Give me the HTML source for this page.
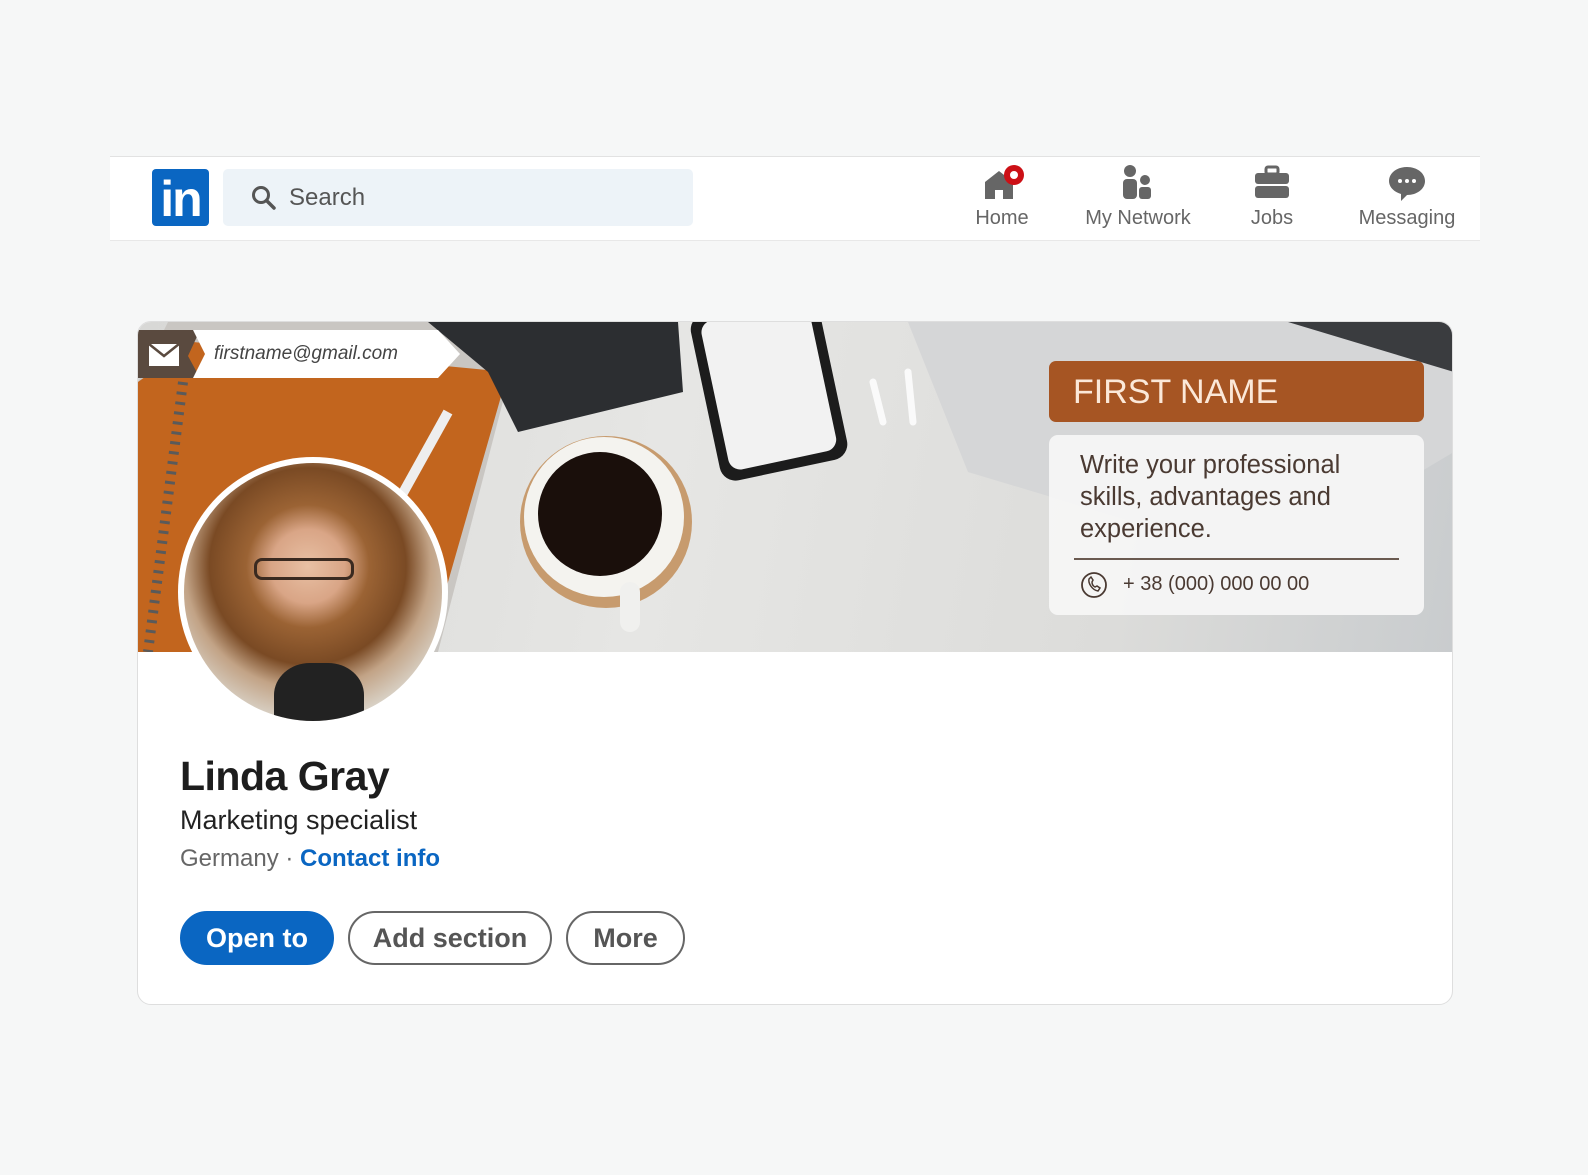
<!DOCTYPE html>
<html><head><meta charset="utf-8"><style>
*{margin:0;padding:0;box-sizing:border-box}
body{width:1588px;height:1175px;background:#f6f7f7;font-family:"Liberation Sans",sans-serif;position:relative;overflow:hidden}
.nav{position:absolute;left:110px;top:156px;width:1370px;height:85px;background:#fff;border-top:1px solid #e2e2e2;border-bottom:1px solid #e8e8e8}
.logo{position:absolute;left:42px;top:12px;width:57px;height:57px;background:#0a66c2;border-radius:4px;color:#fff;font-weight:bold;font-size:50px;line-height:60px;text-align:center;letter-spacing:-2px}
.search{position:absolute;left:113px;top:12px;width:470px;height:57px;background:#edf3f8;border-radius:5px;font-size:24px;color:#555;line-height:57px;padding-left:66px}
.ni{position:absolute;top:6px;text-align:center;color:#666;font-size:20px;width:140px}
.ni svg{display:block;margin:0 auto 4px}
.card{position:absolute;left:137px;top:321px;width:1316px;height:684px;background:#fff;border:1px solid #dedede;border-radius:14px;overflow:hidden}
.cover{position:absolute;left:0;top:0;width:100%;height:330px;background:linear-gradient(100deg,#d8d8d6 0%,#e6e6e4 40%,#dcdcda 75%,#c9ccce 100%);overflow:hidden}
.name{position:absolute;left:42px;top:431px;font-size:41px;font-weight:bold;color:#1d1d1d;letter-spacing:-0.5px}
.title{position:absolute;left:42px;top:483px;font-size:27px;color:#222}
.loc{position:absolute;left:42px;top:523px;font-size:24px;color:#666}
.loc b{color:#0a66c2}
.btn{position:absolute;top:589px;height:54px;border-radius:27px;font-size:27px;line-height:50px;text-align:center;border:2px solid #666;color:#555;font-weight:bold}
</style></head><body>
<div class="nav">
 <div class="logo">in</div>
 <div class="search"><svg style="position:absolute;left:28px;top:16px" width="26" height="26" viewBox="0 0 26 26"><circle cx="10" cy="10" r="7.5" fill="none" stroke="#555" stroke-width="3"/><path d="M15.5 15.5L23 23" stroke="#555" stroke-width="3.5" stroke-linecap="round"/></svg>Search</div>
 <div class="ni" style="left:822px"><svg width="50" height="40" viewBox="0 0 50 40"><path d="M8 19L22 8 36 19V36H26V27H18V36H8Z" fill="#666"/><circle cx="37" cy="12" r="10" fill="#cc1016"/><circle cx="37" cy="12" r="4" fill="#fff"/></svg>Home</div>
 <div class="ni" style="left:958px"><svg width="40" height="40" viewBox="0 0 40 40"><circle cx="12" cy="8" r="6" fill="#666"/><rect x="5" y="16" width="14" height="20" rx="4" fill="#666"/><circle cx="27" cy="17" r="5" fill="#666"/><rect x="21" y="24" width="12" height="12" rx="3" fill="#666"/></svg>My Network</div>
 <div class="ni" style="left:1092px"><svg width="40" height="40" viewBox="0 0 40 40"><rect x="14" y="4" width="12" height="7" rx="2" fill="none" stroke="#666" stroke-width="3"/><rect x="3" y="10" width="34" height="11" rx="3" fill="#666"/><rect x="3" y="23" width="34" height="12" rx="3" fill="#666"/></svg>Jobs</div>
 <div class="ni" style="left:1227px"><svg width="40" height="40" viewBox="0 0 40 40"><path d="M20 4C30 4 38 10 38 18S30 32 20 32L14 38V31C7 29 2 24 2 18 2 10 10 4 20 4Z" fill="#666"/><circle cx="13" cy="18" r="2" fill="#fff"/><circle cx="20" cy="18" r="2" fill="#fff"/><circle cx="27" cy="18" r="2" fill="#fff"/></svg>Messaging</div>
</div>
<div class="card">
 <div class="cover">
  <svg width="1316" height="330" style="position:absolute;left:0;top:0">
   <polygon points="0,60 30,0 350,0 370,60 300,330 0,330" fill="#c9c6c2"/>
   <polygon points="55,20 370,50 290,330 0,330 0,60" fill="#c2651e"/>
   <path d="M45 60 L10 330" stroke="#5a5a5a" stroke-width="10" stroke-dasharray="3 7"/>
   <polygon points="290,0 540,0 545,70 380,110 350,50" fill="#2c2e31"/>
   <path d="M310 90L260 180" stroke="#eee" stroke-width="10"/>
   <rect x="565" y="-20" width="130" height="170" rx="16" fill="#1c1c1c" transform="rotate(-12 630 60)"/>
   <rect x="575" y="-12" width="110" height="152" rx="12" fill="#f2f2f2" transform="rotate(-12 630 60)"/>
   <polygon points="770,0 1316,0 1316,130 1130,240 830,150" fill="#d5d6d7"/>
   <polygon points="1150,0 1316,0 1316,50" fill="#3a3c3f"/>
   <circle cx="468" cy="200" r="86" fill="#c79b6e"/>
   <circle cx="466" cy="195" r="80" fill="#f4f3ef"/>
   <circle cx="462" cy="192" r="62" fill="#1a0f0b"/>
   <rect x="482" y="260" width="20" height="50" rx="10" fill="#f0f0ee"/>
   <path d="M735 60 L745 100 M770 50 L775 100" stroke="#fafafa" stroke-width="7" stroke-linecap="round"/>
  </svg>
  <svg width="330" height="60" style="position:absolute;left:0;top:8px"><polygon points="0,0 62,0 50,26 62,48 0,48" fill="#5a4a3f"/><polygon points="55,0 300,0 322,24 300,48 55,48 67,24" fill="#fff"/><rect x="11" y="14" width="30" height="22" fill="#fff"/><path d="M11 14L26 26 41 14" stroke="#5a4a3f" stroke-width="2.5" fill="none"/></svg>
  <div style="position:absolute;left:76px;top:21px;font-style:italic;font-size:19px;color:#444">firstname@gmail.com</div>
  <div style="position:absolute;left:911px;top:39px;width:375px;height:61px;background:#a65523;border-radius:7px;color:#fbe8d8;font-size:34px;line-height:62px;padding-left:24px;letter-spacing:0px">FIRST NAME</div>
  <div style="position:absolute;left:911px;top:113px;width:375px;height:180px;background:rgba(246,246,245,.95);border-radius:9px">
   <div style="position:absolute;left:31px;top:14px;width:290px;font-size:25.5px;line-height:32px;color:#4a3a32">Write your professional skills, advantages and experience.</div>
   <div style="position:absolute;left:25px;right:25px;top:123px;border-top:2px solid #6a5a50"></div>
   <svg style="position:absolute;left:31px;top:136px" width="28" height="28" viewBox="0 0 28 28"><circle cx="14" cy="14" r="12" fill="none" stroke="#4a3a32" stroke-width="1.8"/><path d="M9 8C8 12 12 19 18 20L20 17 17 15 15 16C13 15 12 13 12 11L13 9 11 6Z" fill="none" stroke="#4a3a32" stroke-width="1.5"/></svg>
   <div style="position:absolute;left:74px;top:138px;font-size:20px;color:#4a3a32">+ 38 (000) 000 00 00</div>
  </div>
 </div>
 <div style="position:absolute;left:40px;top:135px;width:270px;height:270px;border-radius:50%;background:#fff;padding:6px">
  <div style="width:100%;height:100%;border-radius:50%;background:radial-gradient(circle at 48% 40%,#e8c0a4 0,#d9a586 18%,#9b6334 30%,#7a4a24 48%,#c2a386 60%,#d8d0c4 75%);position:relative;overflow:hidden">
   <div style="position:absolute;left:70px;top:95px;width:100px;height:22px;border:3px solid #3a2a20;border-radius:8px"></div>
   <div style="position:absolute;left:90px;top:200px;width:90px;height:80px;background:#222;border-radius:40% 40% 0 0"></div>
  </div>
 </div>
 <div class="name">Linda Gray</div>
 <div class="title">Marketing specialist</div>
 <div class="loc">Germany · <b>Contact info</b></div>
 <div class="btn" style="left:42px;width:154px;background:#0a66c2;border-color:#0a66c2;color:#fff">Open to</div>
 <div class="btn" style="left:210px;width:204px">Add section</div>
 <div class="btn" style="left:428px;width:119px">More</div>
</div>
</body></html>
